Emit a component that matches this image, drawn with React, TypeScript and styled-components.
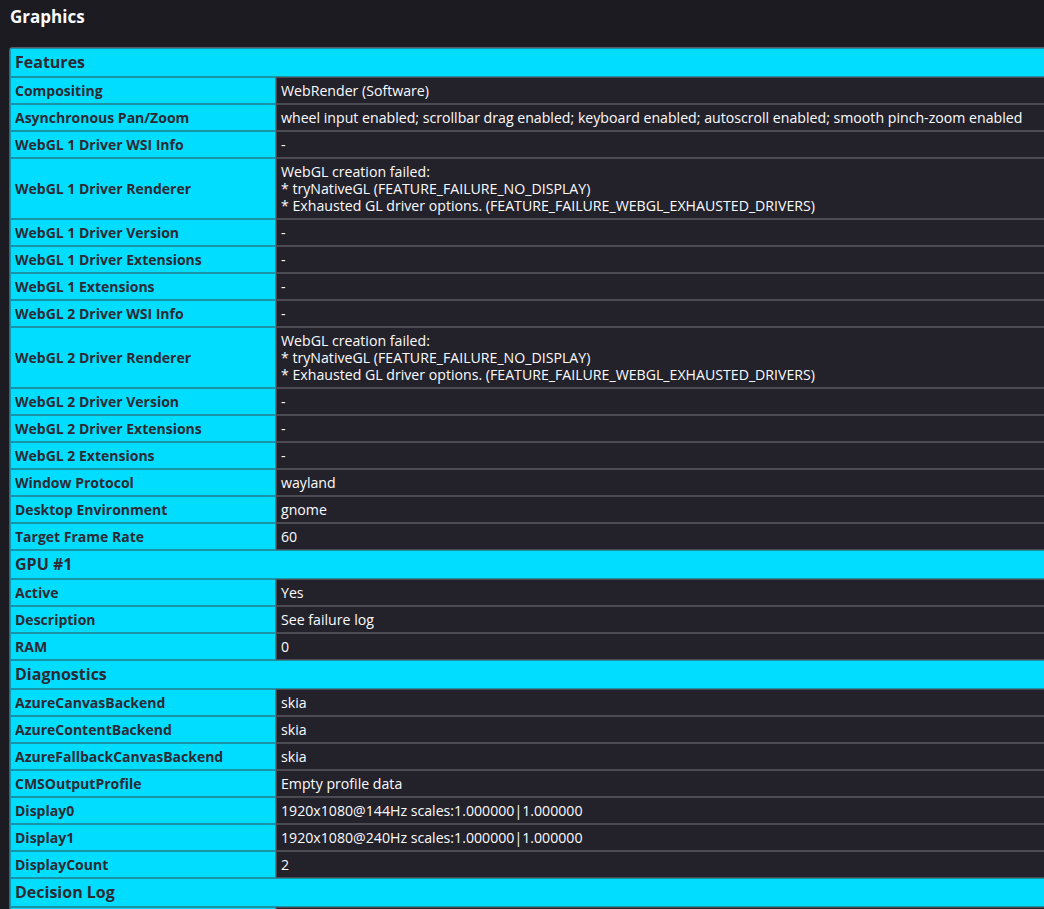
import React from "react";
import styled, { createGlobalStyle } from "styled-components";

const Global = createGlobalStyle`
  html, body { margin: 0; padding: 0; overflow: hidden; background: #1c1b22; }
  body { font-family: "Open Sans", "Noto Sans", sans-serif; color: #fbfbfe; }
`;

const Page = styled.div`
  padding: 4px 0 0 9px;
  width: 1100px;
`;

const Title = styled.h1`
  margin: 0 0 0 1px;
  font-size: 17px;
  line-height: 26px;
  font-weight: 700;
  color: #fbfbfe;
  height: 43px;
`;

const Table = styled.table`
  border-collapse: separate;
  border-spacing: 0;
  table-layout: fixed;
  width: 1100px;
  border: 1px solid #5b5b66;
  border-radius: 3px;
  font-size: 14px;
  line-height: 17px;
`;

const SectionCell = styled.th`
  background: #00ddff;
  color: #2b2a33;
  text-align: left;
  font-size: 16px;
  line-height: 19px;
  font-weight: 700;
  padding: 4px 4px;
  border: 1px solid #1a93a8;
`;

const NameCell = styled.th`
  background: #00ddff;
  color: #2b2a33;
  text-align: left;
  font-weight: 700;
  padding: 4px 4px;
  border: 1px solid #1a93a8;
  vertical-align: middle;
`;

const ValueCell = styled.td`
  background: #23222b;
  color: #fbfbfe;
  padding: 4px 4px;
  border: 1px solid #4c4b53;
  font-size: 14.15px;
  white-space: pre-line;
  vertical-align: middle;
`;

type Row = { kind: "section"; title: string } | { kind: "row"; name: string; value: string };

const failed =
  "WebGL creation failed:\n* tryNativeGL (FEATURE_FAILURE_NO_DISPLAY)\n* Exhausted GL driver options. (FEATURE_FAILURE_WEBGL_EXHAUSTED_DRIVERS)";

const rows: Row[] = [
  { kind: "section", title: "Features" },
  { kind: "row", name: "Compositing", value: "WebRender (Software)" },
  {
    kind: "row",
    name: "Asynchronous Pan/Zoom",
    value:
      "wheel input enabled; scrollbar drag enabled; keyboard enabled; autoscroll enabled; smooth pinch-zoom enabled",
  },
  { kind: "row", name: "WebGL 1 Driver WSI Info", value: "-" },
  { kind: "row", name: "WebGL 1 Driver Renderer", value: failed },
  { kind: "row", name: "WebGL 1 Driver Version", value: "-" },
  { kind: "row", name: "WebGL 1 Driver Extensions", value: "-" },
  { kind: "row", name: "WebGL 1 Extensions", value: "-" },
  { kind: "row", name: "WebGL 2 Driver WSI Info", value: "-" },
  { kind: "row", name: "WebGL 2 Driver Renderer", value: failed },
  { kind: "row", name: "WebGL 2 Driver Version", value: "-" },
  { kind: "row", name: "WebGL 2 Driver Extensions", value: "-" },
  { kind: "row", name: "WebGL 2 Extensions", value: "-" },
  { kind: "row", name: "Window Protocol", value: "wayland" },
  { kind: "row", name: "Desktop Environment", value: "gnome" },
  { kind: "row", name: "Target Frame Rate", value: "60" },
  { kind: "section", title: "GPU #1" },
  { kind: "row", name: "Active", value: "Yes" },
  { kind: "row", name: "Description", value: "See failure log" },
  { kind: "row", name: "RAM", value: "0" },
  { kind: "section", title: "Diagnostics" },
  { kind: "row", name: "AzureCanvasBackend", value: "skia" },
  { kind: "row", name: "AzureContentBackend", value: "skia" },
  { kind: "row", name: "AzureFallbackCanvasBackend", value: "skia" },
  { kind: "row", name: "CMSOutputProfile", value: "Empty profile data" },
  { kind: "row", name: "Display0", value: "1920x1080@144Hz scales:1.000000|1.000000" },
  { kind: "row", name: "Display1", value: "1920x1080@240Hz scales:1.000000|1.000000" },
  { kind: "row", name: "DisplayCount", value: "2" },
  { kind: "section", title: "Decision Log" },
  { kind: "row", name: "\u00a0", value: "\u00a0" },
];

export default function App() {
  return (
    <Page>
      <Global />
      <Title>Graphics</Title>
      <Table>
        <colgroup>
          <col style={{ width: "266px" }} />
          <col />
        </colgroup>
        <tbody>
          {rows.map((r, i) =>
            r.kind === "section" ? (
              <tr key={i}>
                <SectionCell colSpan={2}>{r.title}</SectionCell>
              </tr>
            ) : (
              <tr key={i}>
                <NameCell>{r.name}</NameCell>
                <ValueCell>{r.value}</ValueCell>
              </tr>
            )
          )}
        </tbody>
      </Table>
    </Page>
  );
}
